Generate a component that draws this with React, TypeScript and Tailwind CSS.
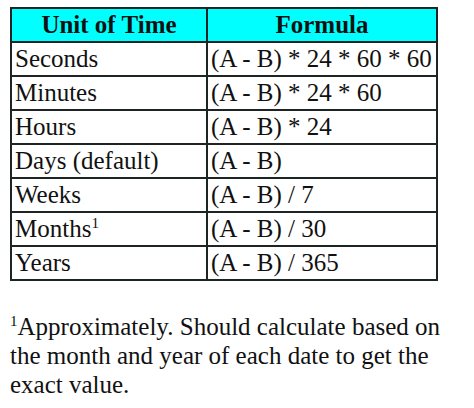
const rows: [React.ReactNode, string][] = [
  ["Seconds", "(A - B) * 24 * 60 * 60"],
  ["Minutes", "(A - B) * 24 * 60"],
  ["Hours", "(A - B) * 24"],
  ["Days (default)", "(A - B)"],
  ["Weeks", "(A - B) / 7"],
  [<>Months<sup className="text-[15px] leading-none relative -top-[9px]">1</sup></>, "(A - B) / 30"],
  ["Years", "(A - B) / 365"],
];

export default function App() {
  return (
    <div className="w-[474px] h-[408px] bg-white text-[#111] pl-[10px] pt-[7px] font-['Liberation_Serif','Times_New_Roman',serif]">
      <table className="border-collapse text-[25px] leading-[30px] font-['Liberation_Serif','Times_New_Roman',serif]">
        <thead>
          <tr className="bg-[#00ffff]">
            <th className="w-[196px] h-[34px] border-2 border-[#1c2424] p-0 font-bold text-center">Unit of Time</th>
            <th className="w-[230px] h-[34px] border-2 border-[#1c2424] p-0 font-bold text-center">Formula</th>
          </tr>
        </thead>
        <tbody>
          {rows.map(([unit, formula], i) => (
            <tr key={i}>
              <td className="h-[34px] border-2 border-[#1c2424] py-0 pl-[3px] pr-0 whitespace-nowrap">{unit}</td>
              <td className="h-[34px] border-2 border-[#1c2424] py-0 pl-[3px] pr-0 whitespace-nowrap">{formula}</td>
            </tr>
          ))}
        </tbody>
      </table>
      <p className="mt-[31px] text-[25px] leading-[29px] w-[460px]">
        <sup className="text-[15px] leading-none relative -top-[9px]">1</sup>Approximately. Should calculate based on the month and year of each date to get the exact value.
      </p>
    </div>
  );
}
